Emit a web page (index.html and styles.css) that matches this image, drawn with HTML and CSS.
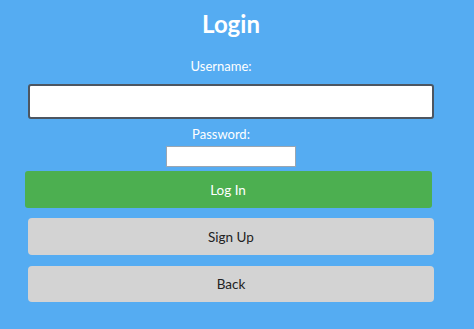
FILE: index.html
```html
<!DOCTYPE html>
<html lang="en">
<head>
  <meta charset="UTF-8" />
  <meta name="viewport" content="width=device-width, initial-scale=1.0"/>
  <title>Login</title>
  <link rel="stylesheet" href="styles.css">
</head>
<body>
  <div class="login-page">
    <h1>Login</h1>
    <form class="login-form" onsubmit="return false;">
      <label for="username" class="field-label">Username:</label>
      <input type="text" id="username" class="username-input">
      <label for="password" class="field-label password-label">Password:</label>
      <input type="password" id="password" class="password-input">
      <button type="submit" class="login-button">Log In</button>
    </form>
    <button class="plain-button signup-button">Sign Up</button>
    <button class="plain-button back-button">Back</button>
  </div>
</body>
</html>
```

FILE: styles.css
```css
* { box-sizing: border-box; }
html, body {
  margin: 0;
  height: 100%;
}
body {
  background-color: #55acf2;
  color: #ffffff;
  font-family: 'Lato', 'Open Sans', sans-serif;
}
.login-page {
  display: flex;
  flex-direction: column;
  align-items: center;
  padding-top: 8px;
  padding-right: 12px;
}
h1 {
  font-size: 24px;
  line-height: 32px;
  font-weight: 700;
  margin: 0 0 17px 0;
}
.login-form {
  display: flex;
  flex-direction: column;
  align-items: center;
  width: 100%;
}
.field-label {
  font-size: 13px;
  line-height: 18px;
  margin-right: 20px;
}
.username-input {
  width: 406px;
  height: 35px;
  margin-top: 9px;
  border: 2px solid #4d5661;
  border-radius: 3px;
  background: #ffffff;
}
.password-label {
  margin-top: 6px;
}
.password-input {
  width: 130px;
  height: 21px;
  margin-top: 3px;
  border: 1px solid #9aa6b2;
  border-radius: 0;
  background: #ffffff;
}
button {
  font-family: inherit;
  font-size: 13.5px;
  border: none;
  cursor: pointer;
}
.login-button {
  width: 407px;
  height: 37px;
  margin-top: 4px;
  margin-right: 6px;
  background-color: #4caf50;
  color: #ffffff;
  border-radius: 3px;
}
.plain-button {
  width: 406px;
  height: 37px;
  background-color: #d3d3d3;
  color: #222222;
  border-radius: 4px;
}
.signup-button {
  margin-top: 10px;
}
.back-button {
  height: 36px;
  margin-top: 11px;
}
```
